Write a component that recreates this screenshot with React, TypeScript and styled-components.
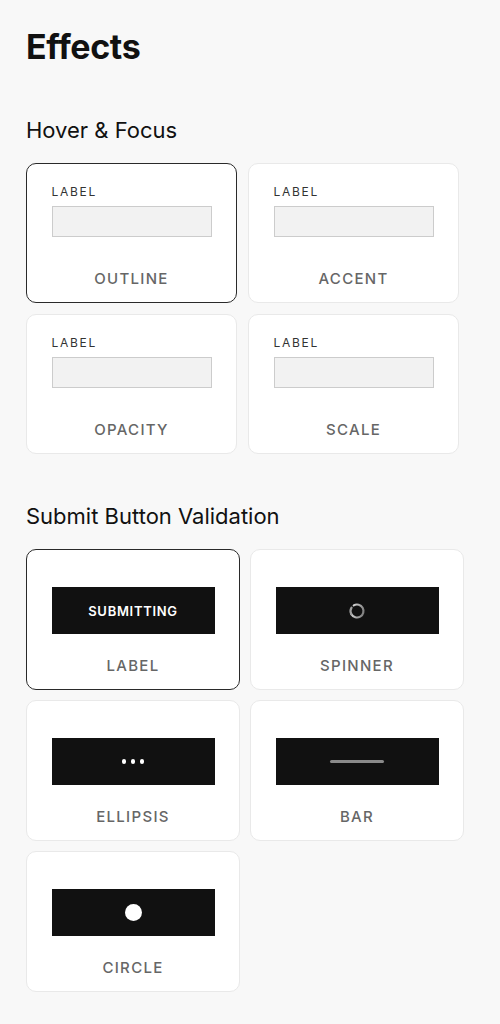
import React from "react";
import styled, { createGlobalStyle } from "styled-components";

const GlobalStyle = createGlobalStyle`
  html, body { margin: 0; padding: 0; background: #f8f8f8; }
  body { font-family: Inter, "Noto Sans", "Liberation Sans", sans-serif; color: #111; }
`;

const Page = styled.div`
  padding: 27px 26px 32px 26px;
  display: flex;
  flex-direction: column;
`;

const Title = styled.h1`
  margin: 0;
  font-size: 34px;
  line-height: 40px;
  font-weight: 700;
  letter-spacing: -0.4px;
  color: #111;
`;

const SectionTitle = styled.h2<{ $top: number; $bottom: number }>`
  margin: ${(p) => p.$top}px 0 ${(p) => p.$bottom}px 0;
  font-size: 22px;
  line-height: 28px;
  font-weight: 400;
  letter-spacing: 0px;
  color: #111;
`;

const Grid = styled.div<{ $col: number; $colGap: number; $rowGap: number; $row: number }>`
  display: grid;
  grid-template-columns: repeat(2, ${(p) => p.$col}px);
  grid-auto-rows: ${(p) => p.$row}px;
  column-gap: ${(p) => p.$colGap}px;
  row-gap: ${(p) => p.$rowGap}px;
`;

const Card = styled.div<{ $active?: boolean; $padTop: number }>`
  box-sizing: border-box;
  background: #fff;
  border: 1px solid ${(p) => (p.$active ? "#2a2a2a" : "#e9e9e9")};
  border-radius: 10px;
  display: flex;
  flex-direction: column;
  align-items: center;
  padding: ${(p) => p.$padTop}px 0 13px 0;
`;

const FieldBlock = styled.div`
  width: 160px;
  display: flex;
  flex-direction: column;
  gap: 6px;
`;

const FieldLabel = styled.div`
  font-size: 12px;
  line-height: 16px;
  font-weight: 400;
  letter-spacing: 1.7px;
  color: #333;
`;

const FieldInput = styled.div`
  box-sizing: border-box;
  height: 31px;
  background: #f2f2f2;
  border: 1px solid #cccccc;
`;

const Caption = styled.div`
  margin-top: auto;
  font-size: 15px;
  line-height: 20px;
  font-weight: 500;
  letter-spacing: 1.3px;
  color: #666;
`;

const SubmitBtn = styled.div`
  width: 163px;
  height: 47px;
  background: #111;
  display: flex;
  align-items: center;
  justify-content: center;
  color: #fff;
  font-size: 13px;
  font-weight: 600;
  letter-spacing: 0.7px;
`;

const Dots = styled.div`
  display: flex;
  gap: 4.5px;
`;

const Dot = styled.span`
  width: 4.5px;
  height: 4.5px;
  border-radius: 50%;
  background: #fff;
`;

const Bar = styled.span`
  width: 54px;
  height: 3px;
  border-radius: 2px;
  background: #8a8a8a;
`;

const BigDot = styled.span`
  width: 17px;
  height: 17px;
  border-radius: 50%;
  background: #fff;
`;

const Spinner = () => (
  <svg width="18" height="18" viewBox="0 0 18 18">
    <defs>
      <linearGradient id="sg" x1="0" y1="0" x2="1" y2="1">
        <stop offset="0" stopColor="#f2f2f2" />
        <stop offset="1" stopColor="#6f6f6f" />
      </linearGradient>
    </defs>
    <path
      d="M9 2.5 A6.5 6.5 0 1 1 2.5 9"
      fill="none"
      stroke="url(#sg)"
      strokeWidth="2.2"
      strokeLinecap="round"
      transform="rotate(-30 9 9)"
    />
    <path
      d="M2.5 9 A6.5 6.5 0 0 1 6 3.3"
      fill="none"
      stroke="#a0a0a0"
      strokeWidth="2.2"
      strokeLinecap="round"
      transform="rotate(-30 9 9)"
    />
  </svg>
);

const hover = [
  { name: "OUTLINE", active: true },
  { name: "ACCENT" },
  { name: "OPACITY" },
  { name: "SCALE" },
];

const submit: { name: string; active?: boolean; content: React.ReactNode }[] = [
  { name: "LABEL", active: true, content: "SUBMITTING" },
  { name: "SPINNER", content: <Spinner /> },
  {
    name: "ELLIPSIS",
    content: (
      <Dots>
        <Dot />
        <Dot />
        <Dot />
      </Dots>
    ),
  },
  { name: "BAR", content: <Bar /> },
  { name: "CIRCLE", content: <BigDot /> },
];

export default function App() {
  return (
    <>
      <GlobalStyle />
      <Page>
        <Title>Effects</Title>
        <SectionTitle $top={49} $bottom={19}>Hover &amp; Focus</SectionTitle>
        <Grid $col={211} $colGap={11} $rowGap={11} $row={140}>
          {hover.map((h) => (
            <Card key={h.name} $active={h.active} $padTop={20}>
              <FieldBlock>
                <FieldLabel>LABEL</FieldLabel>
                <FieldInput />
              </FieldBlock>
              <Caption>{h.name}</Caption>
            </Card>
          ))}
        </Grid>
        <SectionTitle $top={48} $bottom={19}>Submit Button Validation</SectionTitle>
        <Grid $col={214} $colGap={10} $rowGap={10} $row={141}>
          {submit.map((s) => (
            <Card key={s.name} $active={s.active} $padTop={37}>
              <SubmitBtn>{s.content}</SubmitBtn>
              <Caption>{s.name}</Caption>
            </Card>
          ))}
        </Grid>
      </Page>
    </>
  );
}
